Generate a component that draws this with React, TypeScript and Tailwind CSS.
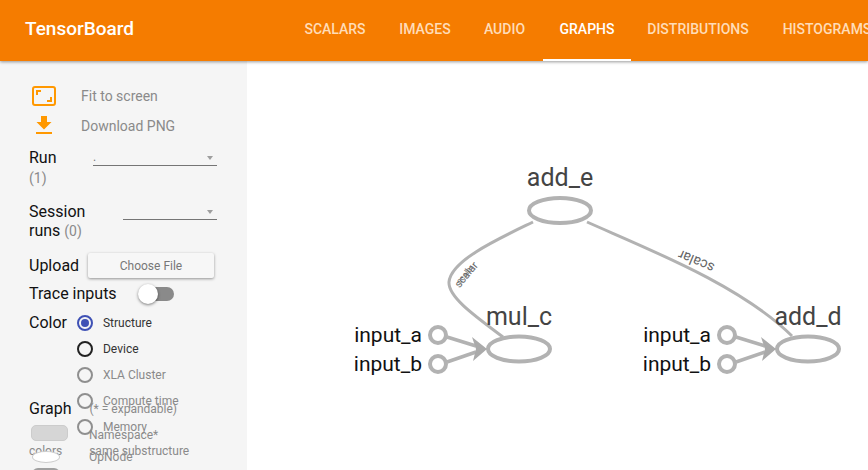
import React from 'react';

const tabs = [
  { name: 'SCALARS', w: 'w-[94px]' },
  { name: 'IMAGES', w: 'w-[86px]' },
  { name: 'AUDIO', w: 'w-[75px] pr-[2px]' },
  { name: 'GRAPHS', w: 'w-[88px]', active: true },
  { name: 'DISTRIBUTIONS', w: 'w-[134px]' },
  { name: 'HISTOGRAMS', w: 'w-[124px]' },
];

const radios = [
  { name: 'Structure', text: 'text-[#333333]', ring: 'border-[#3f51b5]', checked: true },
  { name: 'Device', text: 'text-[#333333]', ring: 'border-[#222222]' },
  { name: 'XLA Cluster', text: 'text-[#8a8a8a]', ring: 'border-[#8f8f8f]' },
  { name: 'Compute time', text: 'text-[#8a8a8a]', ring: 'border-[#8f8f8f]' },
  { name: 'Memory', text: 'text-[#8a8a8a]', ring: 'border-[#8f8f8f]' },
];

const Select: React.FC<{ size: string; value?: string }> = ({ size, value }) => (
  <div className={`${size} border-b border-[#757575] flex items-end justify-between text-[12px] text-[#777777]`}>
    <span className="leading-none pb-[2px]">{value}</span>
    <span className="w-0 h-0 mr-[4px] mb-[5px] border-x-[3.5px] border-x-transparent border-t-[4px] border-t-[#9e9e9e]" />
  </div>
);

const Graph = () => (
  <svg width="621" height="409" viewBox="247 61 621 409" className="block" fontFamily="Roboto, sans-serif">
    <g fill="none" stroke="#b2b2b2" strokeWidth="3">
      <path d="M533 222 C500 238 451 260 449 282 C448 297 475 316 503 337" />
      <path d="M587 222 C650 250 740 285 792 336" />
      <ellipse cx="560" cy="210.500" rx="31" ry="12.500" strokeWidth="4" />
      <ellipse cx="519" cy="349" rx="31" ry="12.500" strokeWidth="4" />
      <ellipse cx="808" cy="349" rx="31" ry="12.500" strokeWidth="4" />
      <circle cx="438" cy="335" r="8" strokeWidth="4" />
      <circle cx="438" cy="364" r="8" strokeWidth="4" />
      <circle cx="727" cy="335" r="8" strokeWidth="4" />
      <circle cx="727" cy="364" r="8" strokeWidth="4" />
      <path d="M447 337 L476 346" strokeWidth="3.500" />
      <path d="M447 362 L476 352" strokeWidth="3.500" />
      <path d="M736 337 L765 346" strokeWidth="3.500" />
      <path d="M736 362 L765 352" strokeWidth="3.500" />
    </g>
    <g fill="#aaaaaa">
      <path d="M487 349 L472 337 L476 349 L473 361 Z" />
      <path d="M776 349 L761 337 L765 349 L762 361 Z" />
    </g>
    <g fontSize="25" fill="#444444" textAnchor="middle">
      <text x="560" y="186">add_e</text>
      <text x="519" y="325">mul_c</text>
      <text x="808" y="325">add_d</text>
    </g>
    <g fontSize="21" fill="#111111" textAnchor="end">
      <text x="422" y="342">input_a</text>
      <text x="422" y="371">input_b</text>
      <text x="711" y="342">input_a</text>
      <text x="711" y="371">input_b</text>
    </g>
    <g fontSize="14" fill="#666666" textAnchor="middle">
      <text transform="translate(469 277) rotate(-50)" fontSize="11">scalar</text>
      <text transform="translate(467 276) rotate(-50)" fontSize="8">scalar</text>
      <text transform="translate(698 257) rotate(203)">scalar</text>
    </g>
  </svg>
);

export default function App() {
  return (
    <div className="w-[868px] h-[470px] overflow-hidden bg-white flex flex-col font-['Roboto',sans-serif]">
      <header className="h-[61px] shrink-0 bg-[#f57c00] flex items-stretch shadow-[0_1px_3px_rgba(0,0,0,0.4)] z-10 pl-[25px]">
        <div className="w-[263px] shrink-0 flex items-center pb-[3px] text-[19px] font-medium text-white">TensorBoard</div>
        <nav className="flex">
          {tabs.map((tab) => (
            <div
              key={tab.name}
              className={`${tab.w} shrink-0 flex items-center justify-center pb-[3px] text-[14px] font-medium relative whitespace-nowrap ${
                tab.active ? 'text-white' : 'text-[#ffdcb8]'
              }`}
            >
              {tab.name}
              {tab.active && <span className="absolute left-0 right-0 bottom-0 h-[2px] bg-white" />}
            </div>
          ))}
        </nav>
      </header>

      <div className="flex-1 flex min-h-0">
        <aside className="w-[247px] shrink-0 bg-[#f5f5f5] pl-[29px] pr-[30px] pt-[20px] overflow-hidden text-[16px] text-[#111111]">
          {/* Toolbar */}
          <div className="h-[30px] flex items-center pl-[3px]">
            <svg width="24" height="20" viewBox="0 0 24 20" fill="none">
              <rect x="1" y="1" width="22" height="18" rx="2" stroke="#ff9800" strokeWidth="2" />
              <path d="M5 9V5H9M15 15H19V11" stroke="#ff9800" strokeWidth="2" />
            </svg>
            <span className="ml-[25px] text-[14px] text-[#8a8a8a]">Fit to screen</span>
          </div>
          <div className="h-[30px] flex items-center pl-[7px]">
            <svg width="16" height="20" viewBox="0 0 16 20" fill="#ff9800">
              <path d="M5 0H11V6H15.500L8 13.500L0.500 6H5Z" />
              <rect x="0" y="16" width="16" height="2" />
            </svg>
            <span className="ml-[29px] text-[14px] text-[#8a8a8a]">Download PNG</span>
          </div>

          {/* Run selector */}
          <div className="flex justify-between mt-[5px] h-[44px]">
            <div className="leading-[24px]">
              Run
              <div className="text-[14px] leading-[16px] text-[#8a8a8a]">(1)</div>
            </div>
            <Select size="w-[124px] h-[20px]" value="." />
          </div>

          {/* Session runs selector */}
          <div className="flex justify-between mt-[12px] h-[44px]">
            <div className="w-[70px] leading-[19px]">
              Session runs <span className="text-[14px] text-[#8a8a8a]">(0)</span>
            </div>
            <Select size="w-[94px] h-[18px]" />
          </div>

          {/* Upload */}
          <div className="flex items-center justify-between mt-[7px] h-[25px]">
            <span>Upload</span>
            <div className="w-[126px] h-[25px] mr-[3px] rounded-[2px] bg-[#f7f7f7] shadow-[0_1px_3px_rgba(0,0,0,0.4)] flex items-center justify-center text-[12px] text-[#777777]">
              Choose File
            </div>
          </div>

          {/* Trace inputs */}
          <div className="flex items-center mt-[3px] h-[26px]">
            <span>Trace inputs</span>
            <div className="ml-[21px] w-[36px] flex items-center relative">
              <span className="ml-[4px] w-[32px] h-[14px] rounded-full bg-[#8a8a8a]" />
              <span className="absolute left-0 w-[20px] h-[20px] rounded-full bg-white shadow-[0_1px_3px_rgba(0,0,0,0.5)]" />
            </div>
          </div>

          {/* Color radios overflow their row and run under the legend */}
          <div className="flex mt-[3px] h-[73px]">
            <span className="leading-[26px]">Color</span>
            <div className="ml-[10px] shrink-0">
              {radios.map((radio) => (
                <div key={radio.name} className="h-[26px] flex items-center">
                  <span className={`w-[16px] h-[16px] rounded-full border-2 ${radio.ring} flex items-center justify-center`}>
                    {radio.checked && <span className="w-[8px] h-[8px] rounded-full bg-[#3f51b5]" />}
                  </span>
                  <span className={`ml-[10px] text-[12px] whitespace-nowrap ${radio.text}`}>{radio.name}</span>
                </div>
              ))}
            </div>
          </div>

          {/* Legend */}
          <div className="flex items-center mt-[13px] h-[26px]">
            <span>Graph</span>
            <span className="ml-[18px] text-[12px] text-[#8a8a8a] whitespace-nowrap">(* = expandable)</span>
          </div>
          <div className="flex items-start mt-[3px] h-[18px]">
            <span className="ml-[2px] w-[37px] h-[16px] rounded-[5px] bg-[#d6d6d6] border border-[#cccccc]" />
            <span className="ml-[21px] pt-[1px] text-[12px] leading-[18px] text-[#8a8a8a]">Namespace*</span>
          </div>
          <div className="flex text-[12px] leading-[16px] text-[#8a8a8a] h-[8px]">
            <span>colors</span>
            <span className="ml-[27px] whitespace-nowrap">same substructure</span>
          </div>
          <div className="flex items-start h-[12px]">
            <span className="ml-[3px] w-[28px] h-[12px] rounded-[50%] bg-white border border-[#cccccc]" />
            <span className="ml-[29px] text-[12px] leading-[12px] text-[#8a8a8a]">OpNode</span>
          </div>
          <div className="ml-[3px] mt-[5px] w-[28px] h-[6px] rounded-t-[6px] bg-[#a0a0a0]" />
        </aside>

        <main className="flex-1 bg-white">
          <Graph />
        </main>
      </div>
    </div>
  );
}
